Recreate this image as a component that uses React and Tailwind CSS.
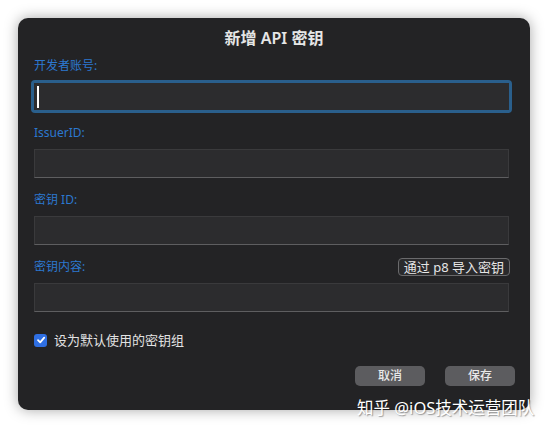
const fields = [
  { label: "开发者账号:", focused: true },
  { label: "IssuerID:" },
  { label: "密钥 ID:" },
  { label: "密钥内容:", action: "通过 p8 导入密钥" },
];

const FieldInput = ({ focused }) => {
  if (focused) {
    return (
      <div className="h-[33px] -mx-[3px] -my-[2px] rounded-[4px] bg-[#2a5f8c] p-[3px]">
        <div className="h-full bg-[#2c2c2e] flex items-center pl-[3px]">
          <div className="w-[2px] h-[22px] bg-white" />
        </div>
      </div>
    );
  }
  return (
    <div className="h-[29px] bg-[#2c2c2e] border border-[#3a3a3c] border-b-[#5e5e60]" />
  );
};

const App = () => {
  return (
    <div
      className="relative w-[548px] h-[429px] bg-white overflow-hidden"
      style={{ fontFamily: '"Noto Sans", "Noto Sans CJK SC", sans-serif' }}
    >
      <div className="ml-[18px] mt-[18px] w-[512px] h-[392px] rounded-[10px] bg-[#232325] shadow-[0_0_14px_rgba(0,0,0,0.35)] flex flex-col pl-[16px] pr-[21px]">
        <h1 className="pt-[9px] text-center text-[16px] leading-[22px] font-semibold text-[#e6e6e6] pl-[5px]">
          新增 API 密钥
        </h1>

        <div className="mt-[9px] flex flex-col">
          {fields.map((f) => (
            <div key={f.label} className="flex flex-col mb-[14px]">
              <div className="flex items-center justify-between h-[16px] mb-[8px]">
                <span className="text-[12px] leading-[16px] text-[#2c78d0]">{f.label}</span>
                {f.action && (
                  <button className="h-[18px] px-[5px] -mr-[1px] rounded-[4px] border border-[#6a6a6c] bg-[#2a2a2c] text-[13px] leading-[16px] text-[#e6e6e6]">
                    {f.action}
                  </button>
                )}
              </div>
              <FieldInput focused={f.focused} />
            </div>
          ))}
        </div>

        <label className="mt-[5px] flex items-center gap-[7px]">
          <span className="w-[13px] h-[13px] rounded-[3px] bg-[#2f6fe3] flex items-center justify-center">
            <svg width="10" height="10" viewBox="0 0 10 10">
              <path d="M2 5.2 L4.2 7.4 L8.2 2.6" fill="none" stroke="white" strokeWidth="1.8" strokeLinecap="round" strokeLinejoin="round" />
            </svg>
          </span>
          <span className="text-[13px] leading-[18px] text-[#e2e2e2]">设为默认使用的密钥组</span>
        </label>

        <div className="mt-[17px] flex justify-end gap-[20px] -mr-[6px]">
          <button className="w-[70px] h-[20px] rounded-[5px] bg-[#5c5c5f] text-[12px] leading-[20px] font-medium text-[#e8e8e8]">
            取消
          </button>
          <button className="w-[70px] h-[20px] rounded-[5px] bg-[#5c5c5f] text-[12px] leading-[20px] font-medium text-[#e8e8e8]">
            保存
          </button>
        </div>
      </div>

      <div className="absolute left-[357px] top-[397px] text-[16.5px] leading-[22px] text-white [text-shadow:1px_1px_1px_rgba(0,0,0,0.35)]">
        知乎 @iOS技术运营团队
      </div>
    </div>
  );
};

export default App;
